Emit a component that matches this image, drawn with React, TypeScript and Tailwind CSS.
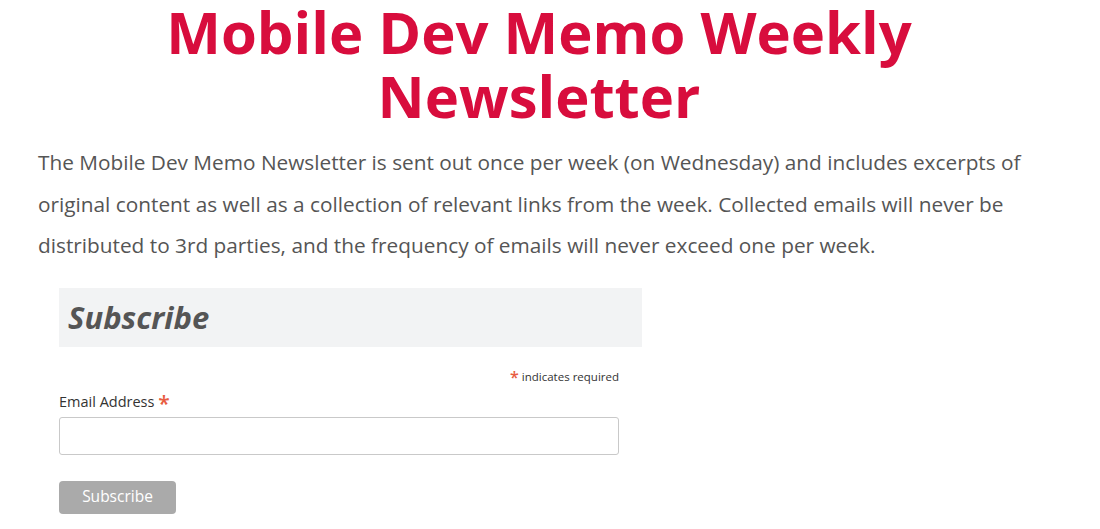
export default function App() {
  return (
    <div className="min-h-screen bg-white pl-[38px] pr-[60px]" style={{ fontFamily: '"Open Sans", sans-serif' }}>
      <h1 className="text-center text-[58px] font-bold leading-[64px] text-[#d80d3d]">
        Mobile Dev Memo Weekly
        <br />
        Newsletter
      </h1>
      <p className="mt-[14px] text-[20.8px] leading-[41.5px] text-[#555555]">
        The Mobile Dev Memo Newsletter is sent out once per week (on Wednesday) and includes excerpts of original
        content as well as a collection of relevant links from the week. Collected emails will never be distributed to
        3rd parties, and the frequency of emails will never exceed one per week.
      </p>

      <div className="ml-[21px] mt-[21px] w-[583px]">
        <div className="flex h-[59px] items-center bg-[#f2f3f4] px-[9px]">
          <h2 className="text-[31px] font-bold italic text-[#555555]">Subscribe</h2>
        </div>
        <div className="w-[560px]">
          <div className="mt-[18px] text-right text-[11.5px] leading-[20px] text-[#333333]">
            <span className="relative top-[2px] text-[16px] font-semibold text-[#e85c41]">*</span> indicates required
          </div>
          <label className="mt-[5px] block text-[14.5px] leading-[20px] text-[#333333]">
            Email Address{" "}
            <span className="relative top-[4px] text-[21px] font-semibold leading-[0] text-[#e85c41]">*</span>
          </label>
          <input
            type="email"
            className="mt-[5px] block h-[38px] w-full rounded-[3px] border border-[#c9c9c9] bg-white px-2 text-[14px] outline-none"
          />
          <button className="mt-[26px] h-[33px] w-[117px] rounded-[4px] bg-[#aaaaaa] text-[15.5px] text-white">
            Subscribe
          </button>
        </div>
      </div>
    </div>
  );
}
